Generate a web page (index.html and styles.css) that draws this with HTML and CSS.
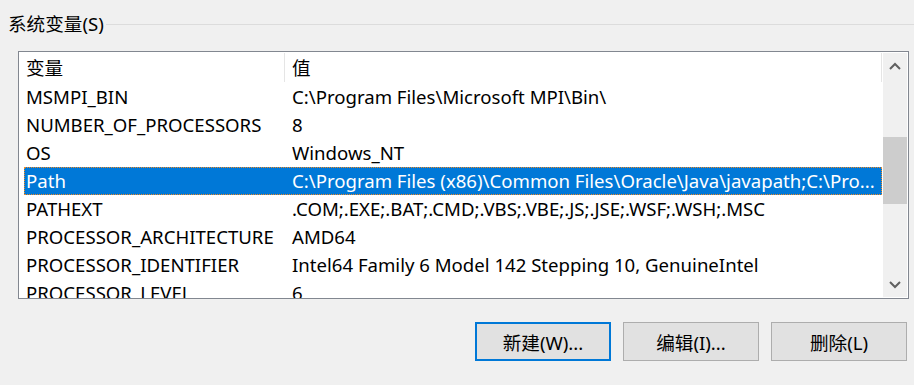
FILE: index.html
```html
<!DOCTYPE html>
<html lang="zh-CN">
<head>
   <meta charset="UTF-8">
   <title>系统变量</title>
   <link rel="stylesheet" href="styles.css">
</head>
<body>

<div class="group-title">
   <span>系统变量(S)</span>
   <span class="group-line"></span>
</div>

<div class="listbox">
   <div class="list-content">
       <div class="list-row list-header">
           <div class="cell cell-name">变量</div>
           <div class="cell cell-value">值</div>
       </div>
       <div class="list-row">
           <div class="cell cell-name">MSMPI_BIN</div>
           <div class="cell cell-value">C:\Program Files\Microsoft MPI\Bin\</div>
       </div>
       <div class="list-row">
           <div class="cell cell-name">NUMBER_OF_PROCESSORS</div>
           <div class="cell cell-value">8</div>
       </div>
       <div class="list-row">
           <div class="cell cell-name">OS</div>
           <div class="cell cell-value">Windows_NT</div>
       </div>
       <div class="list-row selected">
           <div class="cell cell-name">Path</div>
           <div class="cell cell-value">C:\Program Files (x86)\Common Files\Oracle\Java\javapath;C:\Pro...</div>
       </div>
       <div class="list-row">
           <div class="cell cell-name">PATHEXT</div>
           <div class="cell cell-value">.COM;.EXE;.BAT;.CMD;.VBS;.VBE;.JS;.JSE;.WSF;.WSH;.MSC</div>
       </div>
       <div class="list-row">
           <div class="cell cell-name">PROCESSOR_ARCHITECTURE</div>
           <div class="cell cell-value">AMD64</div>
       </div>
       <div class="list-row">
           <div class="cell cell-name">PROCESSOR_IDENTIFIER</div>
           <div class="cell cell-value">Intel64 Family 6 Model 142 Stepping 10, GenuineIntel</div>
       </div>
       <div class="list-row">
           <div class="cell cell-name">PROCESSOR_LEVEL</div>
           <div class="cell cell-value">6</div>
       </div>
   </div>

   <!-- 스크롤바 -->
   <div class="scrollbar">
       <div class="sb-btn">
           <svg width="12" height="8" viewBox="0 0 12 8"><polyline points="1,7 6,2 11,7" fill="none" stroke="#606060" stroke-width="2"/></svg>
       </div>
       <div class="sb-track">
           <div class="sb-thumb"></div>
       </div>
       <div class="sb-btn">
           <svg width="12" height="8" viewBox="0 0 12 8"><polyline points="1,1 6,6 11,1" fill="none" stroke="#606060" stroke-width="2"/></svg>
       </div>
   </div>
</div>

<div class="buttons">
   <button class="btn btn-default">新建(W)...</button>
   <button class="btn">编辑(I)...</button>
   <button class="btn">删除(L)</button>
</div>

</body>
</html>
```

FILE: styles.css
```css
body {
    font-family: "Noto Sans", "Noto Sans CJK SC", sans-serif;
    font-size: 18.6px;
    margin: 0;
    padding: 0;
    background-color: #f0f0f0;
    color: #000;
    width: 914px;
    height: 385px;
    overflow: hidden;
}
.group-title {
    display: flex;
    align-items: center;
    padding: 13px 0 0 8px;
    height: 22px;
    line-height: 22px;
}
.group-line {
    flex: 1;
    border-top: 1px solid #dcdcdc;
    margin-left: 2px;
}
.listbox {
    display: flex;
    margin: 16px 0 0 18px;
    width: 891px;
    height: 248px;
    box-sizing: border-box;
    border: 1px solid #828790;
    background-color: #fff;
    overflow: hidden;
}
.list-content {
    flex: 1;
    padding-left: 5px;
    overflow: hidden;
}
.list-row {
    display: grid;
    grid-template-columns: 261px 1fr;
    height: 28px;
    line-height: 28px;
    box-sizing: border-box;
    white-space: nowrap;
}
.list-header {
    height: 31px;
    line-height: 31px;
}
.list-header .cell {
    border-right: 1px solid #e5e5e5;
    margin: 1px 0 1px;
    line-height: 29px;
}
.cell {
    overflow: hidden;
}
.cell-name {
    padding-left: 2px;
}
.cell-value {
    padding-left: 7px;
}
.selected {
    background-color: #0078d7;
    color: #fff;
    border: 1px dotted #f08a24;
    line-height: 26px;
}
.selected .cell-name {
    padding-left: 1px;
}
.selected .cell-value {
    padding-left: 6px;
}
.scrollbar {
    display: flex;
    flex-direction: column;
    width: 24px;
    margin: 1px;
    background-color: #f0f0f0;
}
.sb-btn {
    height: 25px;
    display: flex;
    align-items: center;
    justify-content: center;
}
.sb-track {
    flex: 1;
}
.sb-thumb {
    margin-top: 59px;
    height: 67px;
    background-color: #cdcdcd;
}
.buttons {
    display: flex;
    justify-content: flex-end;
    gap: 12px;
    margin-top: 23px;
    padding-right: 7px;
}
.btn {
    font-family: "Noto Sans", "Noto Sans CJK SC", sans-serif;
    font-size: 18.6px;
    width: 136px;
    height: 39px;
    background-color: #e1e1e1;
    border: 1px solid #adadad;
    color: #000;
    padding: 0;
}
.btn-default {
    border: 2px solid #0078d7;
}
```
